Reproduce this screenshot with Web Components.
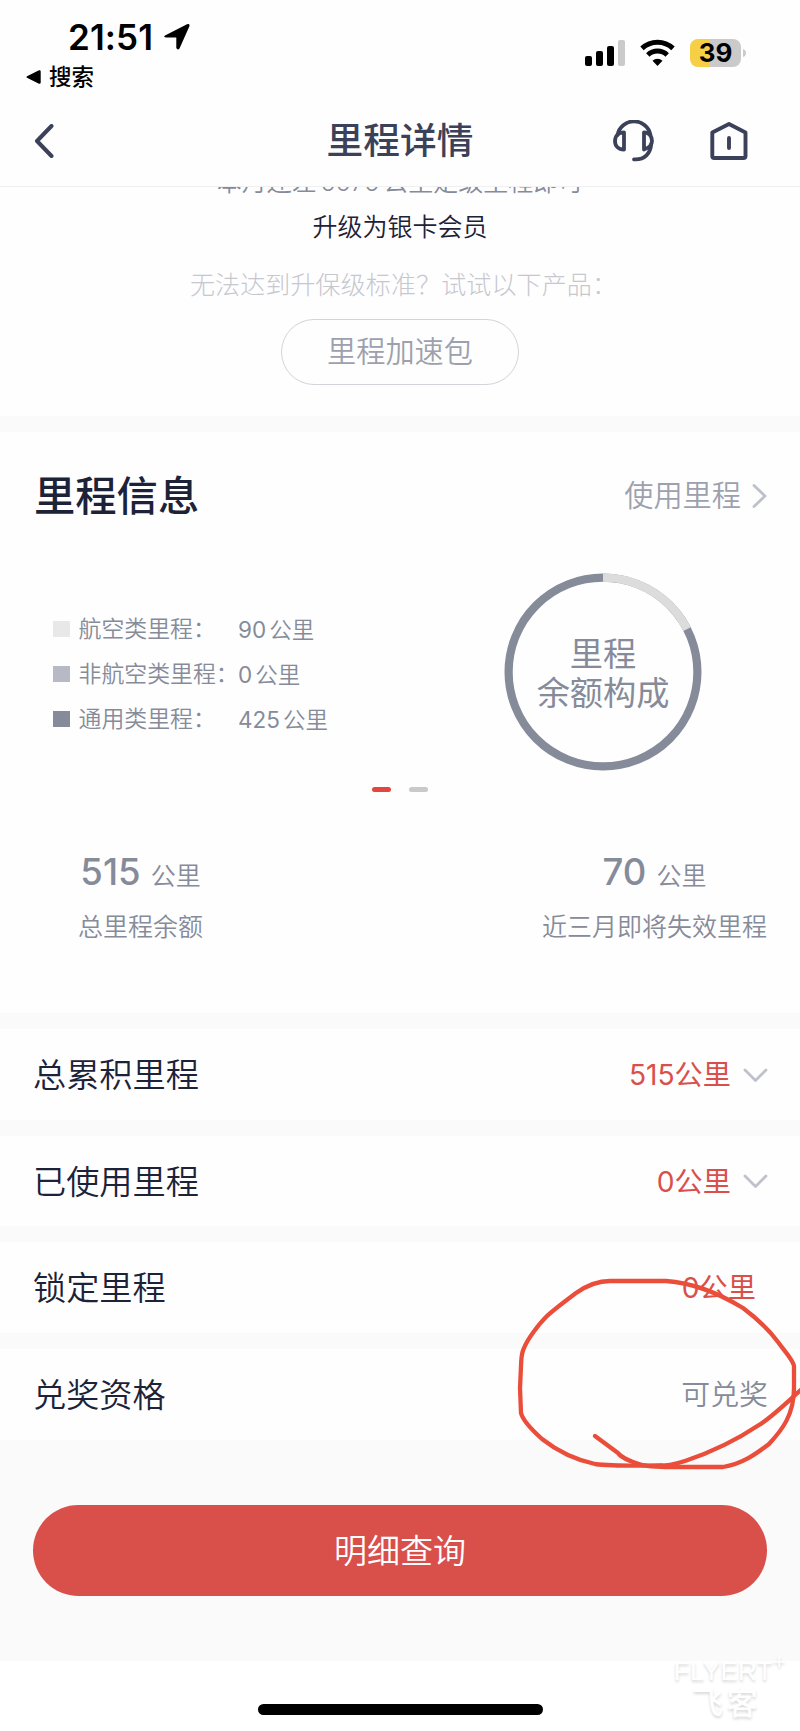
<!DOCTYPE html>
<html lang="zh-CN">
<head>
<meta charset="utf-8">
<meta name="viewport" content="width=device-width, initial-scale=1">
<title>里程详情</title>
<style>
  body {
    --ink: #1c2238;
    --nav: #3b4159;
    --grey: #868b9a;
    --muted: #9da1ae;
    --red: #d9504b;
    --line: #fafafa;

    margin: 0;
    position: relative;
    display: flex;
    flex-direction: column;
    width: 800px;
    height: 1731px;
    overflow: hidden;
    background: #fefefe;
    color: var(--ink);
    font-family: Inter, "Noto Sans CJK SC", sans-serif;
  }

  main {
    flex: 1;
    display: flex;
    flex-direction: column;
    background: var(--line);
  }
</style>
</head>
<body>
  <status-bar time="21:51" battery="39">搜索</status-bar>
  <nav-bar>里程详情</nav-bar>
  <main>
    <upgrade-hint>
      <span slot="need">本月还差 5675 公里定级里程即可</span>
      <span slot="goal">升级为银卡会员</span>
      <span slot="tip">无法达到升保级标准？试试以下产品：</span>
      <span slot="action">里程加速包</span>
    </upgrade-hint>
    <mile-card>
      <span slot="title">里程信息</span>
      <span slot="link">使用里程</span>
      <legend-item slot="legend" color="#e8e8e8" value="90">航空类里程：</legend-item>
      <legend-item slot="legend" color="#b7bac4" value="0">非航空类里程：</legend-item>
      <legend-item slot="legend" color="#868b99" value="425">通用类里程：</legend-item>
      <ring-chart slot="chart" part-value="90" total="515">里程<br>余额构成</ring-chart>
      <mile-stat slot="stats" value="515">总里程余额</mile-stat>
      <mile-stat slot="stats" value="70">近三月即将失效里程</mile-stat>
    </mile-card>
    <mile-row arrow>总累积里程<span slot="value">515公里</span></mile-row>
    <mile-row arrow>已使用里程<span slot="value">0公里</span></mile-row>
    <mile-row class="locked">锁定里程<span slot="value">0公里</span></mile-row>
    <mile-row plain>兑奖资格<span slot="value">可兑奖</span></mile-row>
    <action-button>明细查询</action-button>
  </main>
  <home-indicator></home-indicator>
  <hand-mark></hand-mark>
  <water-mark><span slot="en">FLYERT</span>飞客</water-mark>

<template id="status-bar">
  <style>
    :host {
      display: flex;
      justify-content: space-between;
      height: 96px;
      color: #000;
    }
    .left { padding: 17px 0 0 26px; }
    .time {
      display: flex;
      align-items: center;
      gap: 10px;
      padding-left: 42px;
      height: 40px;
      font-size: 35px;
      font-weight: 600;
      letter-spacing: .1px;
    }
    .back {
      display: flex;
      align-items: center;
      gap: 8px;
      margin-top: 6px;
      font-size: 22.5px;
      line-height: 28px;
      font-weight: 500;
    }
    .right {
      display: flex;
      align-items: center;
      height: 28px;
      padding: 39px 54px 0 0;
    }
    .signal { margin-right: 15px; }
    .wifi { margin-right: 15px; }
    .battery {
      width: 51px;
      height: 28px;
      border-radius: 8px;
      background: linear-gradient(90deg, #f5cf45 20px, #cacaca 20px);
      font-size: 26px;
      line-height: 28px;
      font-weight: 700;
      text-align: center;
    }
    .nub { margin-left: 2px; }
  </style>
  <div class="left">
    <div class="time">
      <span id="time"></span>
      <svg width="28" height="28" viewBox="0 0 28 28"><path d="M2.500 12.200 24 1.200q3-1 2.400 2L16.500 25.500q-1.800 2-3.200-.5V14.500H3Q-.5 14 2.500 12.200Z"/></svg>
    </div>
    <div class="back">
      <svg width="15" height="14" viewBox="0 0 15 14"><path d="M1 6.200 13 .3q1.700-.4 1.700 1.200v11q0 1.600-1.700 1.200L1 7.800q-1-.8 0-1.600Z"/></svg>
      <slot></slot>
    </div>
  </div>
  <div class="right">
    <svg class="signal" width="40" height="28" viewBox="0 0 40 28">
      <rect x="0" y="17" width="7" height="10" rx="2"/>
      <rect x="11" y="12" width="7" height="15" rx="2"/>
      <rect x="22" y="7" width="7" height="20" rx="2"/>
      <rect x="33" y="1" width="7" height="26" rx="2" fill="#cacaca"/>
    </svg>
    <svg class="wifi" width="35" height="28" viewBox="0 0 35 28">
      <g fill="none" stroke="#000" stroke-width="4.900">
        <path d="M2 9.400a22.500 22.500 0 0 1 31 0"/>
        <path d="M7.800 15.900a14 14 0 0 1 19.400 0"/>
      </g>
      <path d="M17.500 27l-5-5.200a7.300 7.300 0 0 1 10 0Z"/>
    </svg>
    <div class="battery"></div>
    <svg class="nub" width="3" height="8" viewBox="0 0 3 8"><path d="M0 0q3 1 3 4t-3 4Z" fill="#cacaca"/></svg>
  </div>
</template>

<template id="nav-bar">
  <style>
    :host {
      display: grid;
      grid-template-columns: 1fr auto 1fr;
      align-items: center;
      height: 90px;
      padding: 0 52px 0 34px;
      border-bottom: 1px solid #f0f0f1;
      background: #fefefe;
      color: var(--nav);
      z-index: 1;
    }
    svg { fill: none; stroke: currentColor; stroke-linecap: round; stroke-linejoin: round; }
    .title {
      padding-left: 18px;
      font-size: 36.700px;
      font-weight: 500;
      line-height: 50px;
    }
    .tools { display: flex; justify-content: flex-end; gap: 55px; }
  </style>
  <svg width="20" height="34" viewBox="0 0 20 34" stroke-width="4"><path d="M17.500 2 3 17l14.500 15"/></svg>
  <div class="title"><slot></slot></div>
  <div class="tools">
    <svg width="42" height="42" viewBox="0 0 42 42" stroke-width="3.800">
      <path d="M4.500 15a16.800 16.800 0 0 1 33 0"/>
      <path d="M11 12.300v17.200C5.500 29.500 2 26 2 21s3.500-8.700 9-8.700Z"/>
      <path d="M31 12.300v17.200c3-1 8-3.500 8-8.500s-3.500-8.700-8-8.700Z"/>
      <path d="M38.200 24C37.500 33 32 40 21 39.300"/>
    </svg>
    <svg width="38" height="42" viewBox="0 0 38 42" stroke-width="3.900">
      <path d="M2.300 12.500 19 4l16.500 8.500V36q0 2-2 2H4.300q-2 0-2-2Z"/>
      <path d="M19 18v10"/>
    </svg>
  </div>
</template>

<template id="upgrade-hint">
  <style>
    :host {
      display: flex;
      flex-direction: column;
      align-items: center;
      height: 245px;
      box-sizing: border-box;
      margin-top: -16px;
      background: #fefefe;
      font-size: 25px;
      font-weight: 350;
      line-height: 40px;
    }
    .need { margin-top: -9px; word-spacing: -3px; color: var(--grey); }
    .goal { margin-top: 5px; }
    .tip { margin: 18px 0 0 7px; letter-spacing: .12px; font-weight: 300; color: #c6c7cf; }
    .action {
      box-sizing: border-box;
      width: 238px;
      height: 66px;
      margin-top: 14px;
      border: 1.500px solid #d3d4da;
      border-radius: 33px;
      font-size: 29.200px;
      line-height: 64px;
      text-align: center;
      color: var(--muted);
    }
  </style>
  <div class="need"><slot name="need"></slot></div>
  <div class="goal"><slot name="goal"></slot></div>
  <div class="tip"><slot name="tip"></slot></div>
  <div class="action"><slot name="action"></slot></div>
</template>

<template id="mile-card">
  <style>
    :host {
      display: flex;
      flex-direction: column;
      height: 581px;
      margin-top: 16px;
      background: #fefefe;
    }
    header {
      display: flex;
      justify-content: space-between;
      align-items: center;
      height: 60px;
      padding: 34px 33px 0 34px;
    }
    .title { font-size: 41.300px; font-weight: 500; line-height: 60px; }
    .link {
      display: flex;
      align-items: center;
      gap: 11px;
      font-size: 29.200px;
      font-weight: 350;
      line-height: 60px;
      color: var(--muted);
    }
    .body {
      display: flex;
      justify-content: space-between;
      align-items: center;
      height: 198px;
      padding: 47px 98px 0 53px;
    }
    .legend { padding-top: 4px; }
    .dots {
      display: flex;
      justify-content: center;
      gap: 18px;
      margin-top: 16px;
    }
    .dots i { width: 19px; height: 5px; border-radius: 3px; background: #c9c9cb; }
    .dots i:first-child { background: #e2463f; }
    .stats {
      display: flex;
      justify-content: space-between;
      padding: 57px 33px 0 78px;
    }
  </style>
  <header>
    <div class="title"><slot name="title"></slot></div>
    <div class="link">
      <slot name="link"></slot>
      <svg width="15" height="24" viewBox="0 0 15 24" fill="none" stroke="#bfc1ca" stroke-width="2.800" stroke-linecap="round" stroke-linejoin="round"><path d="M2 1.500 13 12 2 22.500"/></svg>
    </div>
  </header>
  <div class="body">
    <div class="legend"><slot name="legend"></slot></div>
    <slot name="chart"></slot>
  </div>
  <div class="dots"><i></i><i></i></div>
  <div class="stats"><slot name="stats"></slot></div>
</template>

<template id="legend-item">
  <style>
    :host {
      display: grid;
      grid-template-columns: 17px 151px auto;
      column-gap: 8.500px;
      align-items: center;
      height: 45px;
      font-size: 22.900px;
      font-weight: 350;
      line-height: 45px;
      white-space: nowrap;
      color: var(--grey);
    }
    i { width: 16.500px; height: 16.500px; }
    .value { display: flex; gap: 3px; font-size: 22.500px; }
    .num { font-weight: 400; }
  </style>
  <i></i>
  <span><slot></slot></span>
  <span class="value"><span class="num"></span>公里</span>
</template>

<template id="ring-chart">
  <style>
    :host {
      display: grid;
      place-items: center;
      width: 198px;
      height: 198px;
      font-size: 33.200px;
      font-weight: 400;
      line-height: 39px;
      text-align: center;
      color: var(--grey);
    }
    svg, div { grid-area: 1 / 1; }
    div { padding-top: 3px; white-space: nowrap; }
    circle { fill: none; stroke-width: 8.200; }
  </style>
  <svg width="198" height="198" viewBox="0 0 198 198">
    <g transform="rotate(-90 99 99)">
      <circle cx="99" cy="99" r="94.400" stroke="#868b99"/>
      <circle class="share" cx="99" cy="99" r="94.400" stroke="#dcdcdc" pathLength="100"/>
    </g>
  </svg>
  <div><slot></slot></div>
</template>

<template id="mile-stat">
  <style>
    :host {
      display: flex;
      flex-direction: column;
      align-items: center;
      font-size: 25px;
      font-weight: 350;
      color: var(--grey);
    }
    .top { display: flex; align-items: baseline; gap: 10px; line-height: 46px; }
    b { font-size: 36.500px; font-weight: 500; }
    .label { margin-top: 8px; line-height: 40px; }
  </style>
  <div class="top"><b></b><span>公里</span></div>
  <div class="label"><slot></slot></div>
</template>

<template id="mile-row">
  <style>
    :host {
      display: flex;
      justify-content: space-between;
      align-items: center;
      box-sizing: border-box;
      height: 90.670px;
      margin-top: 16px;
      padding: 1.500px 32px 0 33px;
      background: #fefefe;
      font-size: 33.200px;
      font-weight: 350;
      line-height: 50px;
    }
    .value {
      display: flex;
      align-items: center;
      gap: 12px;
      font-size: 28.200px;
      font-weight: 400;
      color: var(--red);
    }
    :host(.locked) .value { padding-right: 12px; }
    :host([plain]) .value { font-size: 28.900px; font-weight: 350; color: var(--grey); }
    svg { display: none; }
    :host([arrow]) svg { display: block; }
  </style>
  <span><slot></slot></span>
  <div class="value">
    <slot name="value"></slot>
    <svg width="25" height="15" viewBox="0 0 25 15" fill="none" stroke="#c0c2cb" stroke-width="2.800" stroke-linecap="round" stroke-linejoin="round"><path d="M2 2l10.500 10.500L23 2"/></svg>
  </div>
</template>

<template id="action-button">
  <style>
    :host { display: block; padding: 65px 33px; }
    button {
      display: block;
      width: 100%;
      height: 91px;
      padding: 1px 0 0;
      border: 0;
      border-radius: 46px;
      background: var(--red);
      color: #fff;
      font: 350 33px/90px Inter, "Noto Sans CJK SC", sans-serif;
    }
  </style>
  <button><slot></slot></button>
</template>

<template id="home-indicator">
  <style>
    :host { display: flex; justify-content: center; align-items: flex-start; height: 70px; background: #fff; }
    div { width: 285px; height: 11px; margin-top: 43px; border-radius: 6px; background: #000; }
  </style>
  <div></div>
</template>

<template id="hand-mark">
  <style>
    :host { position: absolute; left: 510px; top: 1270px; width: 290px; height: 210px; overflow: hidden; z-index: 2; }
    svg { display: block; fill: none; stroke: #ea4d3a; stroke-width: 4.300; stroke-linecap: round; stroke-linejoin: round; }
  </style>
  <svg width="290" height="210" viewBox="0 0 290 210">
    <path d="M293 118 C275 134 262 147 249 155 C225 171 202 182 175 191 C160 196 145 197 132 195 C118 191 110 186 108 183 L85 166"/>
    <path d="M132 195 C145 197 155 197 165 197 H213 C232 194 246 184 259 174 C272 160 284 145 284 118 V96 C283 90 276 83 268 72 C256 56 241 44 233 38 C210 24 185 13 156 11 H100 C88 11 76 16 66 23 C50 35 42 41 36 47 C30 53 18 68 14 78 C11 84 11.500 88 11 96 L10 118 L11 143 C13 151 22 160 32 169 C46 180 62 189 85 194 C100 196 120 196 152 195.500"/>
  </svg>
</template>

<template id="water-mark">
  <style>
    :host {
      position: absolute;
      right: 14px;
      top: 1656px;
      display: flex;
      flex-direction: column;
      align-items: center;
      color: #fff;
      font-family: "Liberation Sans", "Noto Sans CJK SC", sans-serif;
      font-size: 31px;
      line-height: 36px;
      font-weight: 500;
      text-shadow: 0 2px 3px rgba(0, 0, 0, .16);
      z-index: 2;
    }
    .en { display: flex; height: 30px; font-size: 26px; line-height: 30px; letter-spacing: .3px; font-weight: 400; }
    sup { font-size: 22px; line-height: 12px; }
    .cn { letter-spacing: 4px; padding-right: 6px; }
  </style>
  <div class="en"><slot name="en"></slot><sup>+</sup></div>
  <div class="cn"><slot></slot></div>
</template>

<script>
  class BaseElement extends HTMLElement {
    constructor() {
      super();
      const template = document.getElementById(this.localName);
      this.attachShadow({ mode: 'open' });
      this.shadowRoot.append(template.content.cloneNode(true));
    }

    $(selector) { return this.shadowRoot.querySelector(selector); }
  }

  class StatusBar extends BaseElement {
    connectedCallback() {
      this.$('#time').textContent = this.getAttribute('time');
      this.$('.battery').textContent = this.getAttribute('battery');
    }
  }

  class LegendItem extends BaseElement {
    connectedCallback() {
      this.$('i').style.background = this.getAttribute('color');
      this.$('.num').textContent = this.getAttribute('value');
    }
  }

  class RingChart extends BaseElement {
    connectedCallback() {
      const share = this.getAttribute('part-value') / this.getAttribute('total') * 100;
      this.$('.share').setAttribute('stroke-dasharray', `${share} ${100 - share}`);
    }
  }

  class MileStat extends BaseElement {
    connectedCallback() {
      this.$('b').textContent = this.getAttribute('value');
    }
  }

  customElements.define('status-bar', StatusBar);
  customElements.define('nav-bar', class extends BaseElement {});
  customElements.define('upgrade-hint', class extends BaseElement {});
  customElements.define('mile-card', class extends BaseElement {});
  customElements.define('legend-item', LegendItem);
  customElements.define('ring-chart', RingChart);
  customElements.define('mile-stat', MileStat);
  customElements.define('mile-row', class extends BaseElement {});
  customElements.define('action-button', class extends BaseElement {});
  customElements.define('home-indicator', class extends BaseElement {});
  customElements.define('hand-mark', class extends BaseElement {});
  customElements.define('water-mark', class extends BaseElement {});
</script>
</body>
</html>
